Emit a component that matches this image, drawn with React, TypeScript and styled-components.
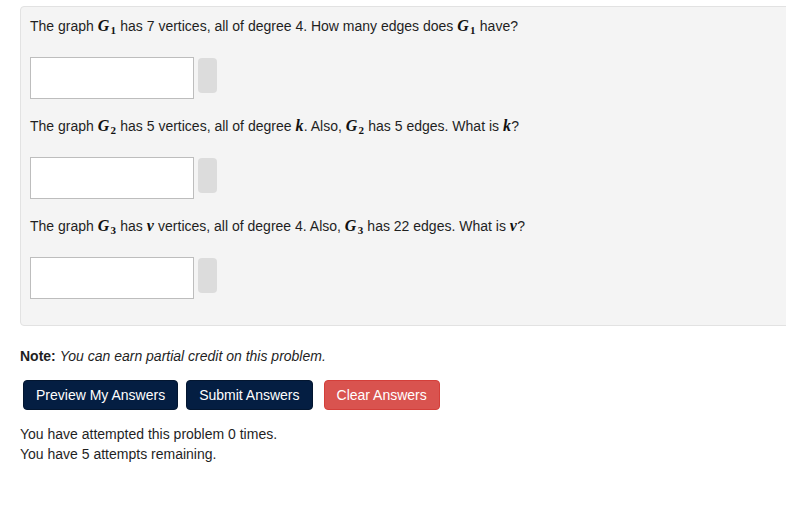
import React from "react";
import styled, { createGlobalStyle } from "styled-components";

const Global = createGlobalStyle`
  html, body { margin: 0; padding: 0; background: #fff; overflow: hidden; }
  body { font-family: Arial, "Liberation Sans", sans-serif; font-size: 14px; color: #1f1f1f; }
`;

const Page = styled.div`
  width: 786px;
  height: 521px;
  padding: 6px 0 0 20px;
  box-sizing: border-box;
  overflow: hidden;
`;

const Panel = styled.div`
  width: 800px;
  box-sizing: border-box;
  background: #f4f4f4;
  border: 1px solid #e2e2e2;
  border-radius: 4px 0 0 4px;
  padding: 9px 9px 26px;
`;

const Question = styled.div`
  & + & { margin-top: 17px; }
`;

const Prompt = styled.div`
  line-height: 20px;
  height: 20px;
  white-space: nowrap;
`;

const MathVar = styled.span`
  font-family: "Liberation Serif", "Times New Roman", serif;
  font-style: italic;
  font-size: 16px;
  font-weight: bold;
  letter-spacing: 0.3px;
  color: #111;
`;

const Sub = styled.sub`
  font-family: "Liberation Serif", "Times New Roman", serif;
  font-style: normal;
  font-weight: bold;
  font-size: 11px;
  vertical-align: -3px;
  line-height: 0;
  margin-left: 1px;
`;

const AnswerRow = styled.div`
  display: flex;
  align-items: flex-start;
  gap: 4px;
  margin-top: 21px;
`;

const AnswerInput = styled.input`
  width: 164px;
  height: 42px;
  box-sizing: border-box;
  border: 1px solid #bdbdbd;
  background: #fff;
  margin: 0;
  padding: 4px 6px;
  font-size: 14px;
  outline: none;
`;

const Feedback = styled.span`
  display: block;
  width: 19px;
  height: 35px;
  margin-top: 1px;
  border-radius: 4px;
  background: #dcdcdc;
`;

const Note = styled.div`
  margin-top: 20px;
  line-height: 20px;
`;

const Bold = styled.b`
  font-weight: bold;
`;

const Italic = styled.i`
  font-style: italic;
`;

const Buttons = styled.div`
  display: flex;
  margin-top: 14px;
  padding-left: 3px;
`;

const Button = styled.button<{ $variant: "primary" | "danger"; $gap: number }>`
  height: 30px;
  box-sizing: border-box;
  padding: 0 12px;
  margin: 0 ${(p) => p.$gap}px 0 0;
  border-radius: 4px;
  font-family: Arial, "Liberation Sans", sans-serif;
  font-size: 14px;
  color: #fff;
  cursor: pointer;
  background: ${(p) => (p.$variant === "primary" ? "#041e42" : "#d9534f")};
  border: 1px solid ${(p) => (p.$variant === "primary" ? "#031630" : "#d43f3a")};
`;

const Attempts = styled.div`
  margin-top: 14px;
  line-height: 20px;
`;

const G = ({ n }: { n: number }) => (
  <MathVar>
    G<Sub>{n}</Sub>
  </MathVar>
);

const Q = ({ children }: { children: React.ReactNode }) => (
  <Question>
    <Prompt>{children}</Prompt>
    <AnswerRow>
      <AnswerInput type="text" />
      <Feedback />
    </AnswerRow>
  </Question>
);

export default function App() {
  return (
    <>
      <Global />
      <Page>
        <Panel>
          <Q>
            The graph <G n={1} /> has 7 vertices, all of degree 4. How many edges does <G n={1} /> have?
          </Q>
          <Q>
            The graph <G n={2} /> has 5 vertices, all of degree <MathVar>k</MathVar>. Also, <G n={2} /> has 5 edges. What is <MathVar>k</MathVar>?
          </Q>
          <Q>
            The graph <G n={3} /> has <MathVar>v</MathVar> vertices, all of degree 4. Also, <G n={3} /> has 22 edges. What is <MathVar>v</MathVar>?
          </Q>
        </Panel>
        <Note>
          <Bold>Note:</Bold> <Italic>You can earn partial credit on this problem.</Italic>
        </Note>
        <Buttons>
          <Button $variant="primary" $gap={8}>Preview My Answers</Button>
          <Button $variant="primary" $gap={11}>Submit Answers</Button>
          <Button $variant="danger" $gap={0}>Clear Answers</Button>
        </Buttons>
        <Attempts>
          You have attempted this problem 0 times.
          <br />
          You have 5 attempts remaining.
        </Attempts>
      </Page>
    </>
  );
}
